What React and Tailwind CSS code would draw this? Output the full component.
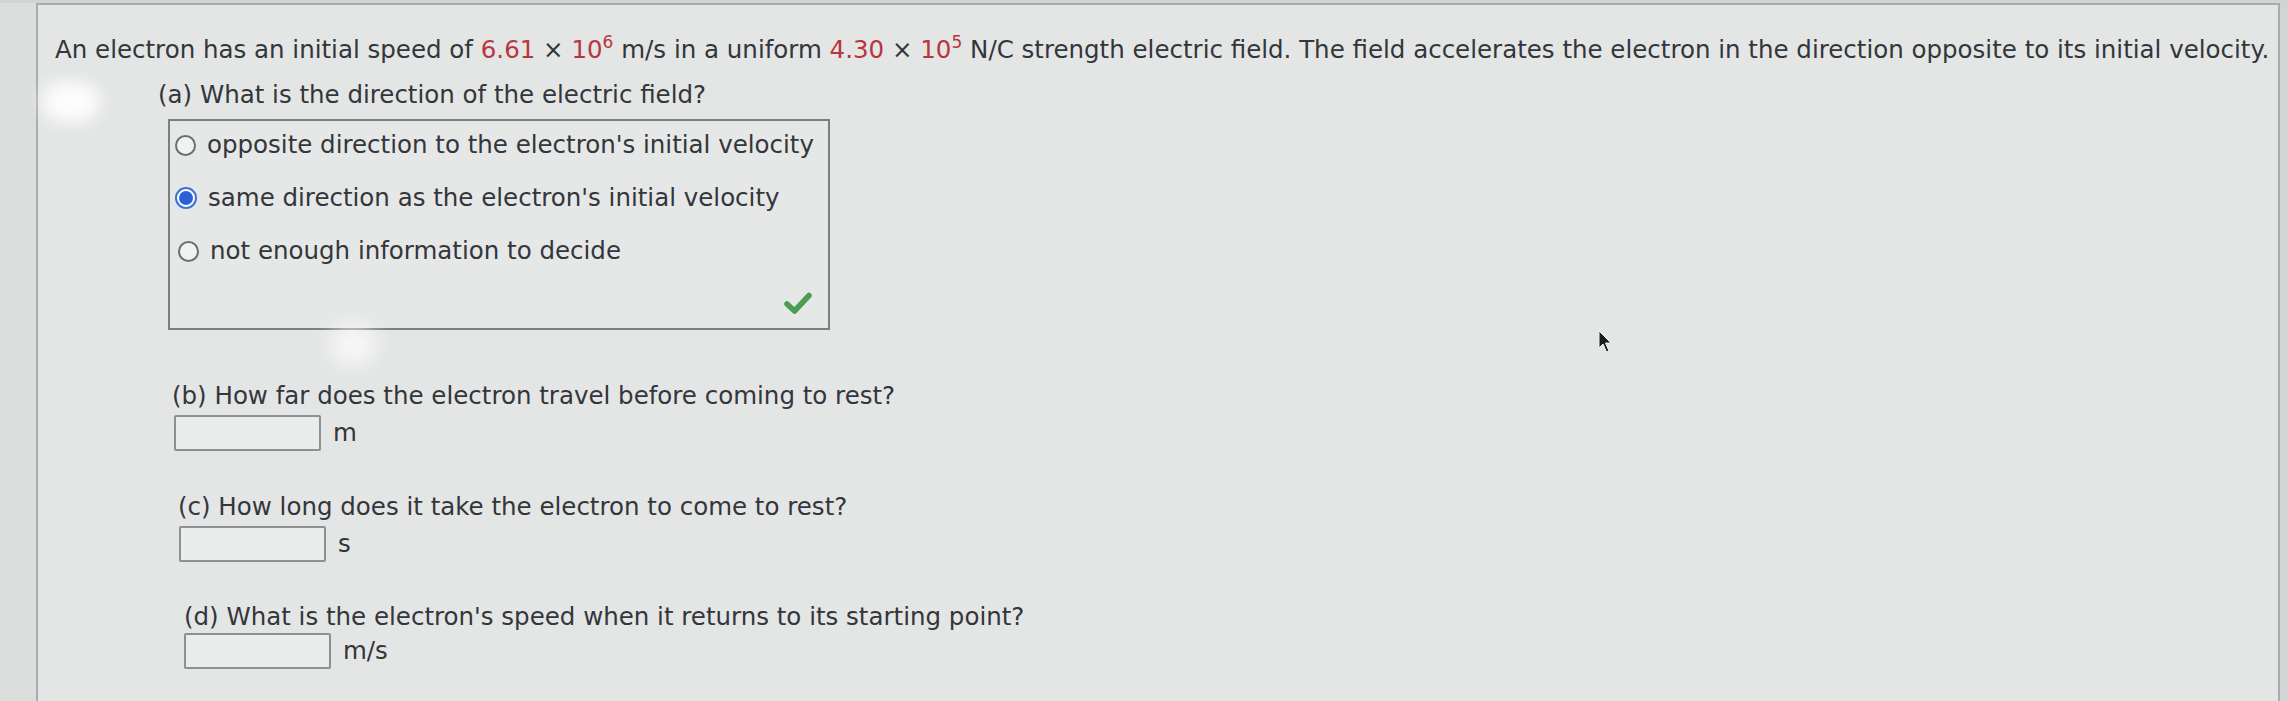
import React from "react";

const font = { fontFamily: '"DejaVu Sans", Verdana, sans-serif' };

function Radio({ checked }) {
  if (checked) {
    return (
      <span className="w-[22px] h-[22px] rounded-full border-[2px] border-[#3e72d8] bg-white flex items-center justify-center shrink-0">
        <span className="w-[14px] h-[14px] rounded-full bg-[#2a62d6]" />
      </span>
    );
  }
  return <span className="w-[21px] h-[21px] rounded-full border-[2px] border-[#6c6e71] bg-[#f1f2f2] shrink-0" />;
}

function Option({ checked, label, indent }) {
  return (
    <div className={`h-[53px] flex items-start pt-[8px] ${indent}`}>
      <div className="h-[32px] flex items-center gap-[11px]">
        <Radio checked={checked} />
        <span className="text-[24.5px] leading-[32px] text-[#33363b] whitespace-nowrap">{label}</span>
      </div>
    </div>
  );
}

function AnswerBox({ unit, className }) {
  return (
    <div className={`flex items-center gap-[12px] ${className}`}>
      <div className="w-[147px] h-[36px] border-[2px] border-[#8d8f92] rounded-[2px] bg-[#ebecec]" />
      <span className="text-[24.5px] leading-[32px] text-[#33363b]">{unit}</span>
    </div>
  );
}

function Red({ children }) {
  return <span className="text-[#b8363d]">{children}</span>;
}

export default function App() {
  return (
    <div className="w-[2288px] h-[701px] bg-[#d9dada] overflow-hidden relative" style={font}>
      <div className="h-[3px] bg-[#d2d3d3]" />
      <div className="flex h-[698px]">
        <div className="w-[36px] bg-[#dcdddd] shrink-0" />
        <div className="w-[2244px] shrink-0 bg-[#e4e5e5] border-l-[2px] border-t-[2px] border-r-[2px] border-[#a9abad] pt-[29px] pl-[17px] text-[#33363b]">
          {/* Question stem */}
          <p className="text-[24.5px] leading-[32px] whitespace-nowrap">
            An electron has an initial speed of <Red>6.61</Red> × <Red>10<sup className="text-[17px] relative -top-[10px]">6</sup></Red> m/s in a uniform{" "}
            <Red>4.30</Red> × <Red>10<sup className="text-[17px] relative -top-[10px]">5</sup></Red> N/C strength electric field. The field accelerates the electron in the direction opposite to its initial velocity.
          </p>

          {/* Part a */}
          <div className="ml-[103px] mt-[13px]">
            <p className="text-[24.5px] leading-[32px]">(a) What is the direction of the electric field?</p>
            <div className="mt-[8px] ml-[10px] w-[662px] border-[2px] border-[#7c7e81] bg-[#e6e7e7] pl-[5px] pr-[16px] pb-[14px]">
              <Option label="opposite direction to the electron's initial velocity" indent="" />
              <Option checked label="same direction as the electron's initial velocity" indent="ml-[0px]" />
              <Option label="not enough information to decide" indent="ml-[3px]" />
              <div className="flex justify-end mt-[12px]">
                <svg width="28" height="22" viewBox="0 0 28 22">
                  <path d="M3 12 L10.5 19 L25 3.5" fill="none" stroke="#4c9d4f" strokeWidth="5.5" strokeLinecap="round" strokeLinejoin="round" />
                </svg>
              </div>
            </div>
          </div>

          {/* Part b */}
          <div className="ml-[117px] mt-[50px]">
            <p className="text-[24.5px] leading-[32px]">(b) How far does the electron travel before coming to rest?</p>
            <AnswerBox unit="m" className="mt-[3px] ml-[2px]" />
          </div>

          {/* Part c */}
          <div className="ml-[123px] mt-[40px]">
            <p className="text-[24.5px] leading-[32px]">(c) How long does it take the electron to come to rest?</p>
            <AnswerBox unit="s" className="mt-[3px] ml-[1px]" />
          </div>

          {/* Part d */}
          <div className="ml-[129px] mt-[39px]">
            <p className="text-[24.5px] leading-[32px]">(d) What is the electron's speed when it returns to its starting point?</p>
            <AnswerBox unit="m/s" className="mt-[0px]" />
          </div>
        </div>
        <div className="flex-1 bg-[#d3d4d5]" />
      </div>

      {/* screen glare */}
      <div className="absolute left-[42px] top-[82px] w-[58px] h-[40px] rounded-full bg-white/90 blur-[8px]" />
      <div className="absolute left-[330px] top-[325px] w-[46px] h-[40px] rounded-full bg-white/70 blur-[10px]" />

      {/* mouse pointer */}
      <svg className="absolute left-[1598px] top-[330px]" width="16" height="24" viewBox="0 0 16 24">
        <path d="M1 1 L1 18 L5 14 L8.5 22 L11 21 L7.5 13 L13 13 Z" fill="#1b1c1e" stroke="#f2f2f2" strokeWidth="1" />
      </svg>
    </div>
  );
}
